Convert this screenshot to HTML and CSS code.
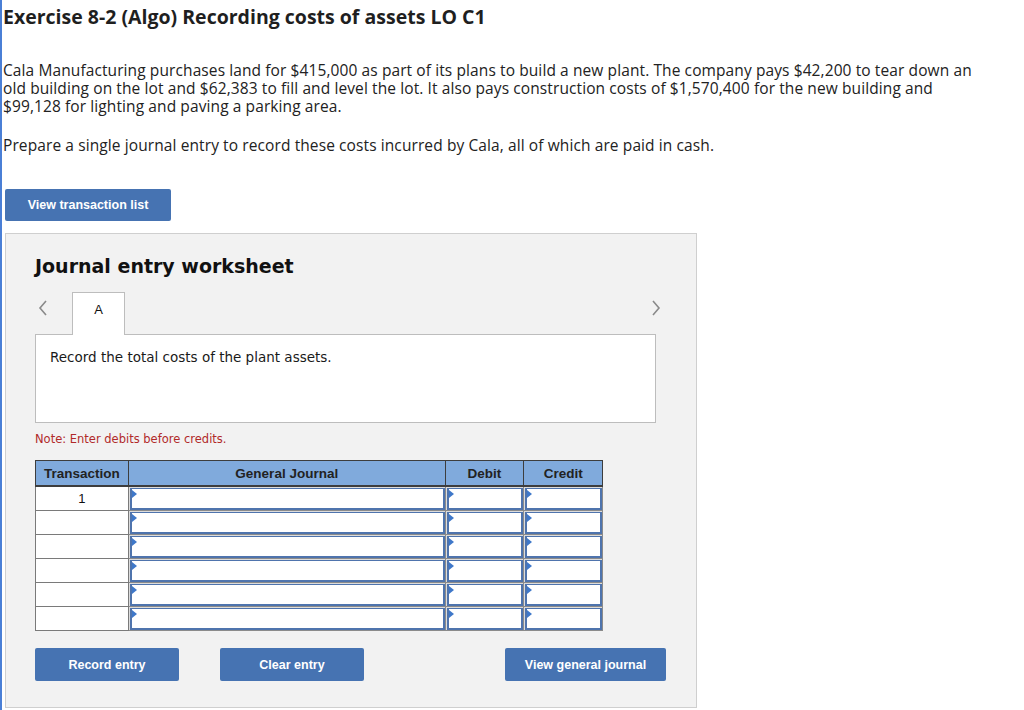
FILE: index.html
```html
<!DOCTYPE html>
<html lang="en">
<head>
  <meta charset="UTF-8" />
  <meta name="viewport" content="width=device-width, initial-scale=1.0"/>
  <title>Exercise 8-2</title>
  <link rel="stylesheet" href="styles.css">
</head>
<body>
  <div class="page">
    <h1>Exercise 8-2 (Algo) Recording costs of assets LO C1</h1>

    <p class="question">Cala Manufacturing purchases land for $415,000 as part of its plans to build a new plant. The company pays $42,200 to tear down an old building on the lot and $62,383 to fill and level the lot. It also pays construction costs of $1,570,400 for the new building and $99,128 for lighting and paving a parking area.</p>
    <p class="question">Prepare a single journal entry to record these costs incurred by Cala, all of which are paid in cash.</p>

    <button class="btn btn-list">View transaction list</button>

    <div class="worksheet">
      <h2>Journal entry worksheet</h2>

      <div class="tabs">
        <span class="arrow">
          <svg width="10" height="16" viewBox="0 0 10 16"><polyline points="8,1 2,8 8,15" fill="none" stroke="#8a8a8a" stroke-width="1.6"/></svg>
        </span>
        <div class="tab">A</div>
        <span class="arrow arrow-right">
          <svg width="10" height="16" viewBox="0 0 10 16"><polyline points="2,1 8,8 2,15" fill="none" stroke="#8a8a8a" stroke-width="1.6"/></svg>
        </span>
      </div>
      <div class="tab-body">Record the total costs of the plant assets.</div>

      <p class="note">Note: Enter debits before credits.</p>

      <table class="journal">
        <thead>
          <tr>
            <th class="col-trans">Transaction</th>
            <th class="col-account">General Journal</th>
            <th class="col-amount">Debit</th>
            <th class="col-amount">Credit</th>
          </tr>
        </thead>
        <tbody>
          <tr>
            <td class="trans">1</td>
            <td class="inp"><div class="field"></div></td>
            <td class="inp"><div class="field"></div></td>
            <td class="inp"><div class="field"></div></td>
          </tr>
          <tr>
            <td class="trans"></td>
            <td class="inp"><div class="field"></div></td>
            <td class="inp"><div class="field"></div></td>
            <td class="inp"><div class="field"></div></td>
          </tr>
          <tr>
            <td class="trans"></td>
            <td class="inp"><div class="field"></div></td>
            <td class="inp"><div class="field"></div></td>
            <td class="inp"><div class="field"></div></td>
          </tr>
          <tr>
            <td class="trans"></td>
            <td class="inp"><div class="field"></div></td>
            <td class="inp"><div class="field"></div></td>
            <td class="inp"><div class="field"></div></td>
          </tr>
          <tr>
            <td class="trans"></td>
            <td class="inp"><div class="field"></div></td>
            <td class="inp"><div class="field"></div></td>
            <td class="inp"><div class="field"></div></td>
          </tr>
          <tr>
            <td class="trans"></td>
            <td class="inp"><div class="field"></div></td>
            <td class="inp"><div class="field"></div></td>
            <td class="inp"><div class="field"></div></td>
          </tr>
        </tbody>
      </table>

      <div class="actions">
        <button class="btn btn-record">Record entry</button>
        <button class="btn btn-clear">Clear entry</button>
        <button class="btn btn-view">View general journal</button>
      </div>
    </div>
  </div>
</body>
</html>
```

FILE: styles.css
```css
body {
  margin: 0;
  background: #ffffff;
  font-family: "Open Sans", Lato, sans-serif;
  color: #222;
}

.page {
  border-left: 2px solid #4a7fd6;
  min-height: 710px;
  padding-left: 1px;
  box-sizing: border-box;
}

h1 {
  margin: 0;
  padding-top: 5px;
  font-size: 19.5px;
  line-height: 24px;
  font-weight: 700;
  color: #1f1f1f;
}

.question {
  margin: 32px 0 21px;
  max-width: 980px;
  font-size: 15.5px;
  letter-spacing: 0.1px;
  line-height: 18px;
}

.question + .question {
  margin-top: 0;
}

.btn {
  background: #4673b2;
  color: #fff;
  border: none;
  border-radius: 2px;
  font-family: "Liberation Sans", Arial, sans-serif;
  font-weight: 700;
  font-size: 12.5px;
  height: 33px;
  cursor: pointer;
}

.btn-list {
  margin: 14px 0 0 2px;
  width: 166px;
  height: 32px;
}

.worksheet {
  margin: 12px 0 0 2px;
  width: 692px;
  height: 475px;
  box-sizing: border-box;
  background: #f2f2f2;
  border: 1px solid #cfcfcf;
  padding: 20px 0 0 29px;
  font-family: "DejaVu Sans", Verdana, sans-serif;
}

h2 {
  margin: 0;
  font-size: 19px;
  line-height: 24px;
  font-weight: 700;
  color: #111;
}

.tabs {
  display: flex;
  align-items: flex-start;
  margin-top: 14px;
  width: 628px;
  height: 42px;
}

.arrow {
  width: 37px;
  padding: 8px 0 0 3px;
  box-sizing: border-box;
}

.arrow-right {
  margin-left: auto;
  width: 12px;
  padding: 8px 0 0 0;
}

.tab {
  width: 53px;
  height: 43px;
  box-sizing: border-box;
  background: #fff;
  border: 1px solid #bdbdbd;
  border-bottom: none;
  text-align: center;
  padding-top: 9px;
  font-family: "Liberation Sans", Arial, sans-serif;
  font-size: 13px;
  color: #111;
  position: relative;
  z-index: 1;
}

.tab-body {
  width: 621px;
  height: 89px;
  box-sizing: border-box;
  background: #fff;
  border: 1px solid #bdbdbd;
  padding: 14px 14px;
  font-size: 13.5px;
  color: #1a1a1a;
}

.note {
  margin: 9px 0 0;
  font-size: 11.5px;
  line-height: 14px;
  color: #b12a2a;
}

.journal {
  margin-top: 14px;
  border-collapse: collapse;
  width: 568px;
  font-family: "Liberation Sans", Arial, sans-serif;
}

.journal th {
  background: #80aadc;
  border: 1px solid #3d3d3d;
  border-bottom-width: 2px;
  height: 24px;
  padding: 0;
  font-size: 13.5px;
  font-weight: 700;
  color: #222;
}

.col-trans { width: 92px; }
.col-account { width: 318px; }
.col-amount { width: 78px; }

.journal td {
  height: 23px;
  padding: 0;
}

.trans {
  background: #fff;
  border: 1px solid #7a7a7a;
  border-top: none;
  text-align: center;
  font-size: 13px;
  color: #111;
}

.inp {
  border: 1px solid #8b8b8b;
  border-top: none;
  background: #dcdcdc;
}

.field {
  position: relative;
  height: 19px;
  margin: 1px 0 0 1px;
  background: #fff;
  border: 2px solid #4f74ad;
  border-top-width: 1px;
}

.field::before {
  content: "";
  position: absolute;
  top: 1px;
  left: 0;
  border-top: 4px solid transparent;
  border-bottom: 4px solid transparent;
  border-left: 5px solid #3f78c9;
}

.actions {
  display: flex;
  margin-top: 17px;
  width: 631px;
}

.btn-record,
.btn-clear {
  width: 144px;
}

.btn-clear {
  margin-left: 41px;
}

.btn-view {
  width: 161px;
  margin-left: auto;
}
```
